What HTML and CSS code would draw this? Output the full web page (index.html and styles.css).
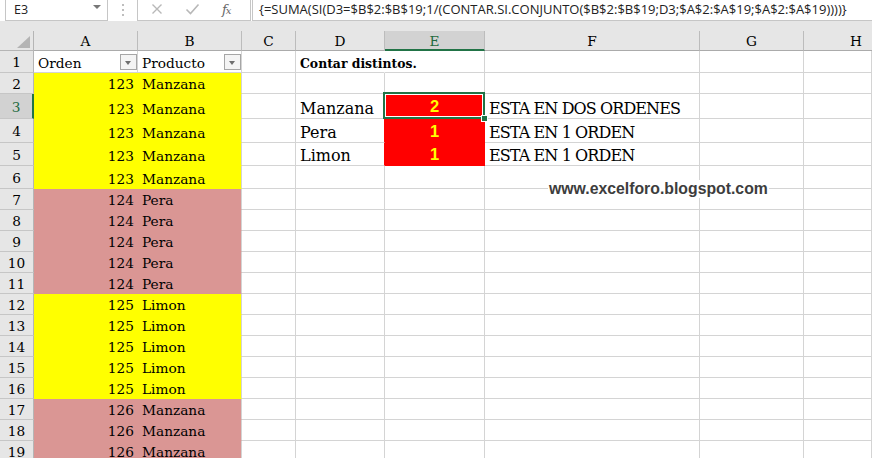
FILE: index.html
```html
<!DOCTYPE html>
<html lang="es">
<head>
<meta charset="utf-8">
<title>Contar distintos</title>
<link rel="stylesheet" href="styles.css">
</head>
<body>
<div class="toolbar">
  <div class="namebox"><span class="nb-text">E3</span><span class="caret"></span></div>
  <div class="dots"><svg width="4" height="16" viewBox="0 0 4 16"><circle cx="2" cy="3" r="1" fill="#a8a8a8"/><circle cx="2" cy="8" r="1" fill="#a8a8a8"/><circle cx="2" cy="13" r="1" fill="#a8a8a8"/></svg></div>
  <div class="fbtns">
    <svg class="ico-x" width="12" height="12" viewBox="0 0 12 12"><path d="M1.5 1.5L10.5 10.5M10.5 1.5L1.5 10.5" stroke="#b8b8b8" stroke-width="1.4" fill="none"/></svg>
    <svg class="ico-ok" width="15" height="12" viewBox="0 0 15 12"><path d="M1.5 6.5L5.5 10.5L13.5 1.5" stroke="#b8b8b8" stroke-width="1.6" fill="none"/></svg>
    <span class="fx"><i>f</i><i class="fx-x">x</i></span>
  </div>
  <div class="formula">{=SUMA(SI(D3=$B$2:$B$19;1/(CONTAR.SI.CONJUNTO($B$2:$B$19;D3;$A$2:$A$19;$A$2:$A$19))))}</div>
</div>
<div class="band"></div>
<div class="sheet">
  <div class="corner"><span class="tri"></span></div>
  <div class="ch">A</div><div class="ch">B</div><div class="ch">C</div><div class="ch">D</div><div class="ch ch-sel">E</div><div class="ch">F</div><div class="ch">G</div><div class="ch ch-last">H</div>

  <div class="rh">1</div>
  <div class="c">Orden<span class="filt"></span></div>
  <div class="c">Producto<span class="filt"></span></div>
  <div class="c"></div>
  <div class="c title">Contar distintos.</div>
  <div class="c"></div><div class="c"></div><div class="c"></div><div class="c"></div>

  <div class="rh">2</div>
  <div class="c ya num">123</div><div class="c yb">Manzana</div>
  <div class="c"></div><div class="c"></div><div class="c"></div><div class="c"></div><div class="c"></div><div class="c"></div>

  <div class="rh rh-sel">3</div>
  <div class="c ya num">123</div><div class="c yb">Manzana</div>
  <div class="c"></div>
  <div class="c big dred">Manzana</div>
  <div class="c red sel">2<span class="selbox"><span class="handle"></span></span></div>
  <div class="c big cond">ESTA EN DOS ORDENES</div>
  <div class="c"></div><div class="c"></div>

  <div class="rh">4</div>
  <div class="c ya num">123</div><div class="c yb">Manzana</div>
  <div class="c"></div>
  <div class="c big dred">Pera</div>
  <div class="c red">1</div>
  <div class="c big cond">ESTA EN 1 ORDEN</div>
  <div class="c"></div><div class="c"></div>

  <div class="rh">5</div>
  <div class="c ya num">123</div><div class="c yb">Manzana</div>
  <div class="c"></div>
  <div class="c big dred">Limon</div>
  <div class="c red">1</div>
  <div class="c big cond">ESTA EN 1 ORDEN</div>
  <div class="c"></div><div class="c"></div>

  <div class="rh">6</div>
  <div class="c ya num">123</div><div class="c yb">Manzana</div>
  <div class="c"></div><div class="c"></div><div class="c"></div><div class="c"></div><div class="c"></div><div class="c"></div>

  <div class="rh">7</div>
  <div class="c pa num">124</div><div class="c pb">Pera</div>
  <div class="c"></div><div class="c"></div><div class="c"></div><div class="c"></div><div class="c"></div><div class="c"></div>

  <div class="rh">8</div>
  <div class="c pa num">124</div><div class="c pb">Pera</div>
  <div class="c"></div><div class="c"></div><div class="c"></div><div class="c"></div><div class="c"></div><div class="c"></div>

  <div class="rh">9</div>
  <div class="c pa num">124</div><div class="c pb">Pera</div>
  <div class="c"></div><div class="c"></div><div class="c"></div><div class="c"></div><div class="c"></div><div class="c"></div>

  <div class="rh">10</div>
  <div class="c pa num">124</div><div class="c pb">Pera</div>
  <div class="c"></div><div class="c"></div><div class="c"></div><div class="c"></div><div class="c"></div><div class="c"></div>

  <div class="rh">11</div>
  <div class="c pa num">124</div><div class="c pb">Pera</div>
  <div class="c"></div><div class="c"></div><div class="c"></div><div class="c"></div><div class="c"></div><div class="c"></div>

  <div class="rh">12</div>
  <div class="c ya num">125</div><div class="c yb">Limon</div>
  <div class="c"></div><div class="c"></div><div class="c"></div><div class="c"></div><div class="c"></div><div class="c"></div>

  <div class="rh">13</div>
  <div class="c ya num">125</div><div class="c yb">Limon</div>
  <div class="c"></div><div class="c"></div><div class="c"></div><div class="c"></div><div class="c"></div><div class="c"></div>

  <div class="rh">14</div>
  <div class="c ya num">125</div><div class="c yb">Limon</div>
  <div class="c"></div><div class="c"></div><div class="c"></div><div class="c"></div><div class="c"></div><div class="c"></div>

  <div class="rh">15</div>
  <div class="c ya num">125</div><div class="c yb">Limon</div>
  <div class="c"></div><div class="c"></div><div class="c"></div><div class="c"></div><div class="c"></div><div class="c"></div>

  <div class="rh">16</div>
  <div class="c ya num">125</div><div class="c yb">Limon</div>
  <div class="c"></div><div class="c"></div><div class="c"></div><div class="c"></div><div class="c"></div><div class="c"></div>

  <div class="rh">17</div>
  <div class="c pa num">126</div><div class="c pb">Manzana</div>
  <div class="c"></div><div class="c"></div><div class="c"></div><div class="c"></div><div class="c"></div><div class="c"></div>

  <div class="rh">18</div>
  <div class="c pa num">126</div><div class="c pb">Manzana</div>
  <div class="c"></div><div class="c"></div><div class="c"></div><div class="c"></div><div class="c"></div><div class="c"></div>

  <div class="rh">19</div>
  <div class="c pa num">126</div><div class="c pb">Manzana</div>
  <div class="c"></div><div class="c"></div><div class="c"></div><div class="c"></div><div class="c"></div><div class="c"></div>
</div>
<div class="watermark">www.excelforo.blogspot.com</div>
</body>
</html>
```

FILE: styles.css
```css
* { box-sizing: border-box; }
html, body { margin: 0; padding: 0; }
body {
  width: 872px;
  height: 458px;
  overflow: hidden;
  background: #fff;
  position: relative;
  font-family: "DejaVu Serif", serif;
  color: #000;
}

/* formula bar */
.toolbar {
  height: 21px;
  display: flex;
  align-items: stretch;
  background: #fff;
}
.namebox {
  margin-left: 5px;
  width: 103px;
  border: 1px solid #c6c6c6;
  border-top: none;
  display: flex;
  align-items: center;
  justify-content: space-between;
  padding: 0 6px 1px 8px;
  font: 12.5px "Open Sans", sans-serif;
  color: #222;
}
.caret {
  width: 0; height: 0;
  border-left: 4px solid transparent;
  border-right: 4px solid transparent;
  border-top: 4px solid #777;
  margin-bottom: 5px;
}
.dots {
  width: 29px;
  display: flex;
  align-items: center;
  justify-content: center;
  padding-bottom: 2px;
}
.fbtns {
  width: 114px;
  border: 1px solid #c6c6c6;
  border-top: none;
  display: flex;
  align-items: center;
  padding: 0 0 2px 13px;
}
.ico-x { margin-right: 22px; }
.ico-ok { margin-right: 22px; }
.fx {
  font: 13px "DejaVu Serif", serif;
  color: #666;
  letter-spacing: -1px;
}
.fx-x { font-size: 10px; }
.formula {
  flex: 1;
  min-width: 0;
  border-left: 1px solid #c6c6c6;
  border-bottom: 1px solid #c6c6c6;
  margin-left: 1px;
  padding: 0 0 2px 6px;
  display: flex;
  align-items: center;
  font: 13px "Open Sans", sans-serif;
  color: #222;
  white-space: nowrap;
  overflow: hidden;
}
.band { height: 10px; background: #e6e6e6; }

/* sheet grid */
.sheet {
  display: grid;
  grid-template-columns: 34px 104px 104px 54px 89px 100px 215px 104px 1fr;
  grid-template-rows: 20px 22px 21px 25px 24px 23px 23px repeat(13, 21px);
  height: 427px;
  overflow: hidden;
  background: #fff;
  font-size: 13.7px;
}
.corner {
  background: #e6e6e6;
  border-right: 1px solid #b5b5b5;
  border-bottom: 1px solid #b5b5b5;
  position: relative;
}
.tri {
  position: absolute;
  right: 3px;
  bottom: 2px;
  width: 0; height: 0;
  border-left: 13px solid transparent;
  border-bottom: 12px solid #b4b4b4;
}
.ch {
  background: #e6e6e6;
  border-right: 1px solid #bcbcbc;
  border-bottom: 1px solid #ababab;
  display: flex;
  align-items: center;
  justify-content: center;
  padding-top: 1px;
}
.ch-last {
  justify-content: flex-start;
  padding-left: 46px;
  border-right: none;
}
.ch-sel {
  background: #d2d2d2;
  border-bottom: 2px solid #217346;
  color: #1e6b3f;
}
.rh {
  background: #e6e6e6;
  border-right: 1px solid #b5b5b5;
  border-bottom: 1px solid #c6c6c6;
  display: flex;
  align-items: center;
  justify-content: center;
  padding-top: 1px;
}
.rh-sel {
  background: #d2d2d2;
  border-right: 2px solid #217346;
  color: #1e6b3f;
}
.c {
  border-right: 1px solid #d4d4d4;
  border-bottom: 1px solid #d4d4d4;
  display: flex;
  align-items: flex-end;
  padding: 0 3px 1px 4px;
  white-space: nowrap;
  position: relative;
  min-width: 0;
}
.num { justify-content: flex-end; }
.ya { background: #ffff00; border-right-color: #ffff00; border-bottom-color: #ffff00; }
.yb { background: #ffff00; border-bottom-color: #ffff00; }
.pa { background: #da9694; border-right-color: #da9694; border-bottom-color: #da9694; }
.pb { background: #da9694; border-bottom-color: #da9694; }

.filt {
  position: absolute;
  right: 0;
  top: 3px;
  width: 17px;
  height: 16px;
  border: 1px solid #a6a6a6;
  background: #f4f4f4;
}
.filt::after {
  content: "";
  position: absolute;
  left: 4px;
  top: 6px;
  border-left: 3.5px solid transparent;
  border-right: 3.5px solid transparent;
  border-top: 4px solid #6e6e6e;
}
.title {
  font-weight: bold;
  font-size: 12.4px;
  padding-bottom: 1px;
  border-right-color: transparent;
  z-index: 1;
}
.big {
  font-size: 16px;
  padding-bottom: 0;
}
.cond { letter-spacing: -0.9px; }
.dred { border-right-color: #ff0000; }
.red {
  background: #ff0000;
  border-right-color: #ff0000;
  border-bottom-color: #ff0000;
  justify-content: center;
  align-items: center;
  padding: 1px 0 0;
  font: bold 16.5px "Liberation Sans", sans-serif;
  color: #ffff00;
}
.sel { z-index: 3; overflow: visible; }
.selbox {
  position: absolute;
  left: -2px;
  top: -2px;
  right: -1px;
  bottom: -1px;
  border: 2px solid #217346;
  box-shadow: inset 0 0 0 1px #fff;
}
.handle {
  position: absolute;
  right: -5px;
  bottom: -5px;
  width: 7px;
  height: 7px;
  background: #217346;
  border: 1px solid #fff;
}
.watermark {
  position: absolute;
  left: 548px;
  top: 180px;
  line-height: 1;
  font: bold 15.8px "Liberation Sans", sans-serif;
  color: #3d3d3d;
  background: #fff;
  padding: 0 1px;
}
```
